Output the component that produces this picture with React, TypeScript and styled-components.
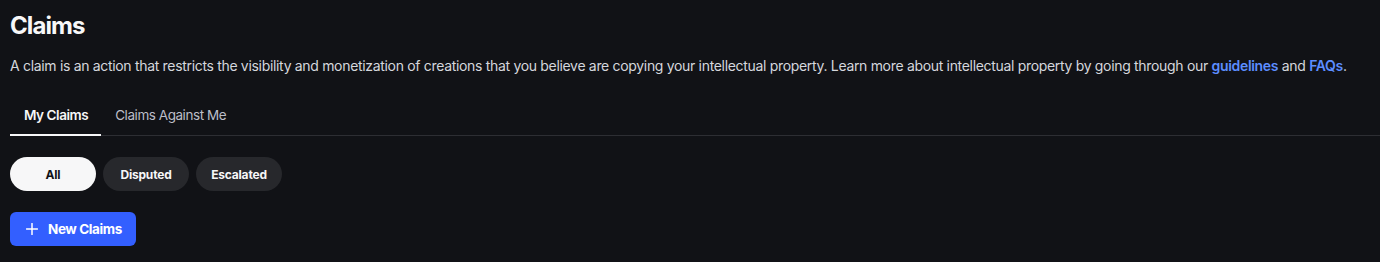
import styled, { createGlobalStyle } from "styled-components";

const GlobalStyle = createGlobalStyle`
  html, body {
    margin: 0;
    padding: 0;
    background: #111216;
  }
  body {
    font-family: "Inter", "Noto Sans", sans-serif;
    color: #f7f7f8;
  }
`;

const filters = ["All", "Disputed", "Escalated"];

const App = () => {
    return (
        <>
            <GlobalStyle />
            <Page>
                <Title>Claims</Title>
                <Description>
                    A claim is an action that restricts the visibility and monetization of creations that you believe are copying your intellectual property. Learn more about intellectual property by going through our <TextLink href="#">guidelines</TextLink> and <TextLink href="#">FAQs</TextLink>.
                </Description>
                <Tabs>
                    <Tab active>My Claims</Tab>
                    <Tab>Claims Against Me</Tab>
                </Tabs>
                <Filters>
                    {filters.map((f, i) => (
                        <Pill key={f} active={i === 0}>{f}</Pill>
                    ))}
                </Filters>
                <PrimaryButton>
                    <svg width="12" height="12" viewBox="0 0 12 12" fill="none">
                        <path d="M6 0.5v11M0.5 6h11" stroke="currentColor" strokeWidth="1.5" strokeLinecap="round" />
                    </svg>
                    New Claims
                </PrimaryButton>
            </Page>
        </>
    );
};

const Page = styled.div`
  padding: 12px 10px 16px;
  display: flex;
  flex-direction: column;
  align-items: flex-start;
`;

const Title = styled.h1`
  margin: 0;
  font-size: 24px;
  line-height: 28px;
  font-weight: 700;
  letter-spacing: -0.9px;
  color: #f7f7f8;
`;

const Description = styled.p`
  margin: 16px 0 0;
  font-size: 14px;
  line-height: 20px;
  letter-spacing: -0.32px;
  color: #d5d7dd;
  white-space: nowrap;
`;

const TextLink = styled.a`
  color: #5c8dff;
  font-weight: 600;
  text-decoration: none;
`;

const Tabs = styled.div`
  display: flex;
  align-self: stretch;
  margin: 20px -10px 0 0;
  border-bottom: 1px solid #2d2e33;
`;

const Tab = styled.div<{ active?: boolean }>`
  padding: 9px 13px 11px 14px;
  font-size: 13.5px;
  line-height: 20px;
  letter-spacing: -0.45px;
  font-weight: ${(p) => (p.active ? 600 : 400)};
  color: ${(p) => (p.active ? "#f7f7f8" : "#bcbec8")};
  box-shadow: ${(p) => (p.active ? "inset 0 -2px 0 #f7f7f8" : "none")};
  margin-bottom: -1px;
`;

const Filters = styled.div`
  display: flex;
  gap: 7px;
  margin-top: 21px;
`;

const Pill = styled.div<{ active?: boolean }>`
  height: 34px;
  min-width: 86px;
  padding: 0 15px;
  box-sizing: border-box;
  display: flex;
  align-items: center;
  justify-content: center;
  border-radius: 17px;
  font-size: 12px;
  font-weight: 700;
  letter-spacing: -0.2px;
  background: ${(p) => (p.active ? "#f7f7f8" : "#27282c")};
  color: ${(p) => (p.active ? "#111216" : "#f7f7f8")};
`;

const PrimaryButton = styled.button`
  margin-top: 21px;
  height: 34px;
  padding: 0 14px 0 16px;
  display: flex;
  align-items: center;
  gap: 10px;
  border: none;
  border-radius: 6px;
  background: #335fff;
  color: #ffffff;
  font-family: inherit;
  font-size: 13.5px;
  font-weight: 700;
  letter-spacing: -0.4px;
  cursor: pointer;
`;

export default App;
